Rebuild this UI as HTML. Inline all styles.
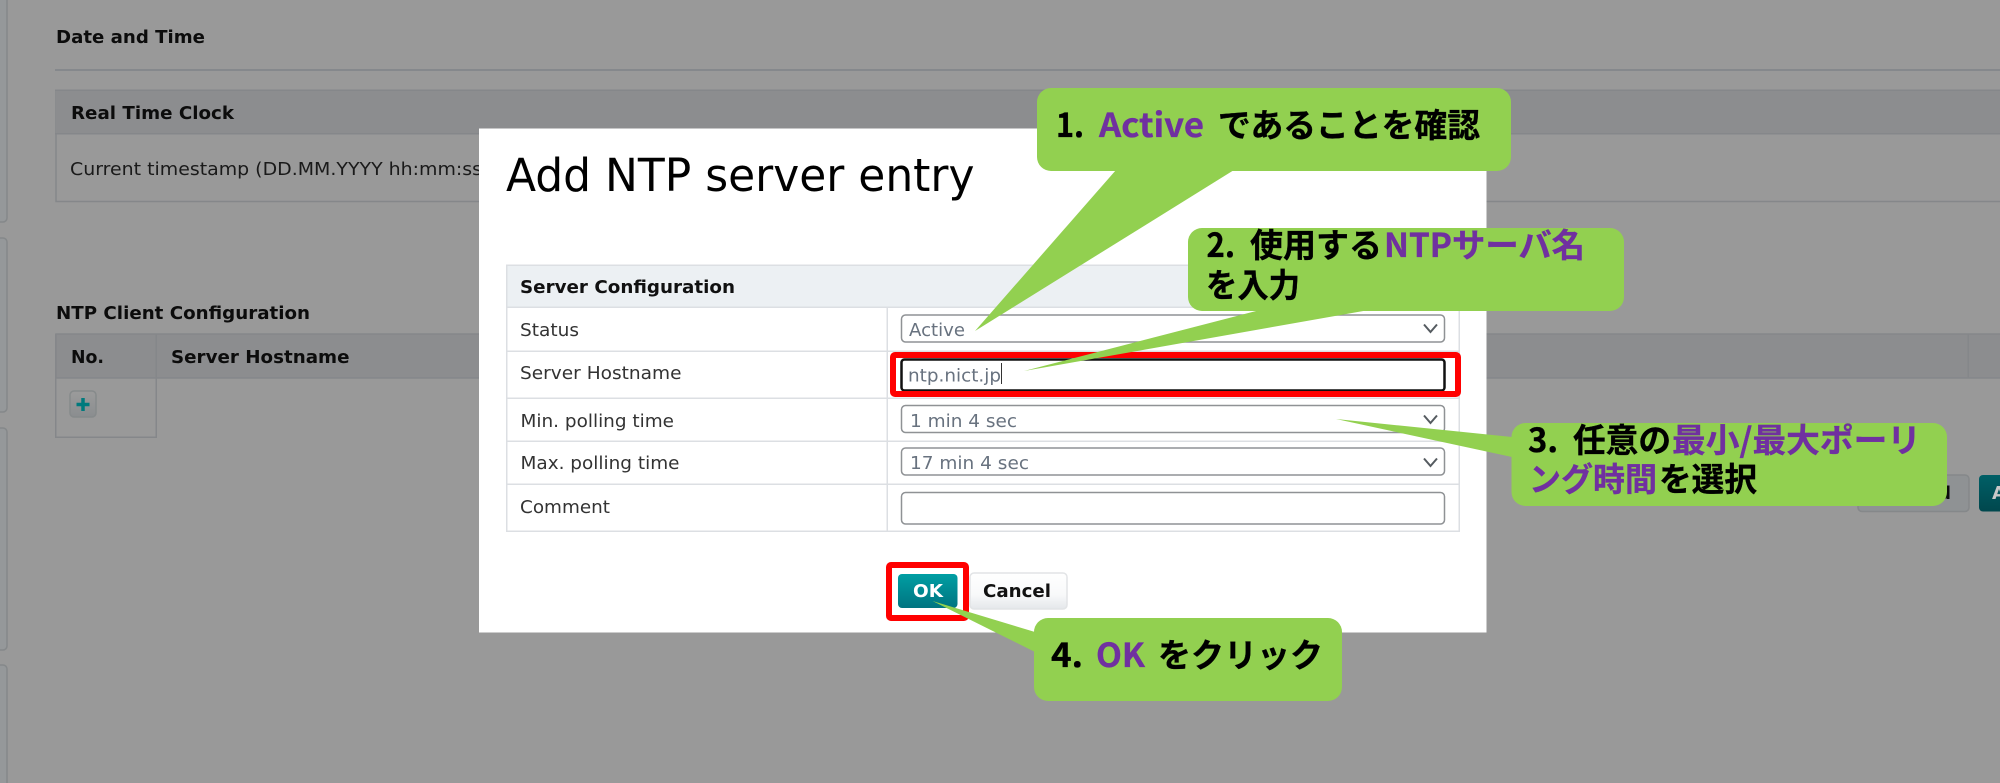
<!DOCTYPE html>
<html lang="ja">
<head>
<meta charset="utf-8">
<title>Add NTP server entry</title>
<style>
html,body{margin:0;padding:0;width:2000px;height:783px;overflow:hidden;background:#999}
svg{display:block;filter:blur(.3px)}
.v{font-family:"DejaVu Sans","Liberation Sans",sans-serif}
.b{font-weight:700;fill:#0c0c0c}
.j{font-family:"Noto Sans CJK JP","Liberation Sans",sans-serif;font-weight:700;font-size:33px;fill:#000;stroke:#000;stroke-width:.35px}
.p{fill:#7030a0;stroke:#7030a0}
.g{fill:#68727f}
.r{fill:#333}
</style>
</head>
<body>
<svg xmlns="http://www.w3.org/2000/svg" width="2000" height="783" viewBox="0 0 2000 783">
<defs>
<linearGradient id="ok" x1="0" y1="0" x2="0" y2="1"><stop offset="0" stop-color="#009ea3"/><stop offset="1" stop-color="#007480"/></linearGradient>
<linearGradient id="cn" x1="0" y1="0" x2="0" y2="1"><stop offset="0" stop-color="#fff"/><stop offset=".6" stop-color="#f8f9fa"/><stop offset="1" stop-color="#e4e7ea"/></linearGradient>
<linearGradient id="pl" x1="0" y1="0" x2="0" y2="1"><stop offset="0" stop-color="#9b9b9b"/><stop offset="1" stop-color="#8a8d8f"/></linearGradient>
<linearGradient id="ap" x1="0" y1="0" x2="0" y2="1"><stop offset="0" stop-color="#005f66"/><stop offset="1" stop-color="#00474d"/></linearGradient>
</defs>

<!-- page background -->
<rect width="2000" height="783" fill="#999"/>

<!-- sidebar boxes -->
<g fill="#95989a" stroke="#85888a" stroke-width="1.5">
<rect x="-10" y="-20" width="17" height="242" rx="4"/>
<rect x="-10" y="238" width="17" height="174" rx="4"/>
<rect x="-10" y="428" width="17" height="222" rx="4"/>
<rect x="-10" y="665" width="17" height="140" rx="4"/>
</g>

<!-- page content -->
<text class="v b" x="56" y="43" font-size="18" textLength="149" lengthAdjust="spacingAndGlyphs">Date and Time</text>
<rect x="55" y="69" width="1945" height="2" fill="#85888c"/>

<rect x="56" y="90.5" width="1950" height="111" fill="#999" stroke="#85878a" stroke-width="1.5"/>
<rect x="56" y="91" width="1950" height="42.5" fill="#8c8d8f"/>
<rect x="55" y="133" width="1945" height="1.5" fill="#85878a"/>
<rect x="55" y="89.5" width="1945" height="1.5" fill="#85878a"/>
<text class="v b" x="71" y="119" font-size="18" textLength="163" lengthAdjust="spacingAndGlyphs">Real Time Clock</text>
<text class="v" x="70" y="175" font-size="18" fill="#1a1a1a" textLength="412" lengthAdjust="spacingAndGlyphs">Current timestamp (DD.MM.YYYY hh:mm:ss</text>

<text class="v b" x="56" y="319" font-size="18" textLength="254" lengthAdjust="spacingAndGlyphs">NTP Client Configuration</text>
<rect x="56" y="334" width="1950" height="44" fill="#8c8d8f" stroke="#85878a" stroke-width="1.5"/>
<rect x="155.5" y="334" width="1.5" height="103" fill="#85878a"/>
<rect x="1967.5" y="334" width="1.5" height="44" fill="#85878a"/>
<rect x="55" y="334" width="1.5" height="103.500" fill="#85878a"/>
<rect x="55" y="436.500" width="102" height="1.500" fill="#85878a"/>
<text class="v b" x="71" y="363" font-size="18" textLength="33" lengthAdjust="spacingAndGlyphs">No.</text>
<text class="v b" x="171" y="363" font-size="18" textLength="178.500" lengthAdjust="spacingAndGlyphs">Server Hostname</text>

<rect x="70" y="391" width="26" height="26" rx="4" fill="url(#pl)" stroke="#868a8b" stroke-width="1.500"/>
<path d="M83 398V411M76.500 404.500H89.500" stroke="#007a7d" stroke-width="3.500" fill="none"/>

<!-- background buttons -->
<rect x="1858" y="475" width="111" height="36.500" rx="4" fill="#8f9294" stroke="#85888a" stroke-width="1.500"/>
<text class="v b" x="1878" y="499" font-size="18" textLength="73" lengthAdjust="spacingAndGlyphs">Discard</text>
<rect x="1979" y="475" width="40" height="36.500" rx="4" fill="url(#ap)"/>
<text class="v" x="1992" y="499" font-size="18" font-weight="700" fill="#c8c8c8">A</text>

<!-- modal -->
<rect x="479" y="128.500" width="1007.500" height="504" fill="#fff"/>
<text class="v" x="506" y="191" font-size="45" fill="#000" textLength="468.500" lengthAdjust="spacingAndGlyphs">Add NTP server entry</text>

<!-- modal table -->
<rect x="507" y="265.500" width="952" height="41.500" fill="#ecf0f3"/>
<g fill="#dcdfe3">
<rect x="506" y="264.500" width="953.500" height="1.500"/>
<rect x="506" y="306.500" width="953.500" height="1.500"/>
<rect x="506" y="350.500" width="953.500" height="1.500"/>
<rect x="506" y="397.500" width="953.500" height="1.500"/>
<rect x="506" y="440.500" width="953.500" height="1.500"/>
<rect x="506" y="483.500" width="953.500" height="1.500"/>
<rect x="506" y="530.500" width="953.500" height="1.500"/>
<rect x="506" y="264.500" width="1.500" height="267.500"/>
<rect x="1458.500" y="264.500" width="1.500" height="267.500"/>
<rect x="886.500" y="307" width="1.500" height="225"/>
</g>
<text class="v" x="520" y="293" font-size="18" font-weight="700" fill="#111" textLength="215" lengthAdjust="spacingAndGlyphs">Server Configuration</text>
<text class="v r" x="520" y="336" font-size="18" textLength="59" lengthAdjust="spacingAndGlyphs">Status</text>
<text class="v r" x="520" y="379" font-size="18" textLength="161.500" lengthAdjust="spacingAndGlyphs">Server Hostname</text>
<text class="v r" x="520.500" y="427" font-size="18" textLength="153.500" lengthAdjust="spacingAndGlyphs">Min. polling time</text>
<text class="v r" x="520.500" y="469" font-size="18" textLength="159" lengthAdjust="spacingAndGlyphs">Max. polling time</text>
<text class="v r" x="520" y="513" font-size="18" textLength="90" lengthAdjust="spacingAndGlyphs">Comment</text>

<!-- controls -->
<g fill="#fff" stroke="#8f9295" stroke-width="1.500">
<rect x="901.500" y="315" width="543" height="27" rx="4"/>
<rect x="901.500" y="405.500" width="543" height="27" rx="4"/>
<rect x="901.500" y="448" width="543" height="27" rx="4"/>
<rect x="901.500" y="492.500" width="543" height="31.500" rx="4"/>
</g>
<rect x="901.500" y="359.500" width="543" height="31" rx="3" fill="#fff" stroke="#111" stroke-width="2.500"/>
<g fill="none" stroke="#555b60" stroke-width="2">
<path d="M1424 324.500L1430.500 332L1437 324.500"/>
<path d="M1424 415.500L1430.500 423L1437 415.500"/>
<path d="M1424 458.500L1430.500 466L1437 458.500"/>
</g>
<text class="v g" x="909" y="336" font-size="18" textLength="56" lengthAdjust="spacingAndGlyphs">Active</text>
<text class="v g" x="908" y="381.500" font-size="18" textLength="93" lengthAdjust="spacingAndGlyphs">ntp.nict.jp</text>
<rect x="1001" y="363" width="1" height="21" fill="#333"/>
<text class="v g" x="910" y="427" font-size="18" textLength="107" lengthAdjust="spacingAndGlyphs">1 min 4 sec</text>
<text class="v g" x="910" y="469" font-size="18" textLength="119" lengthAdjust="spacingAndGlyphs">17 min 4 sec</text>

<!-- buttons -->
<rect x="898" y="574" width="59.500" height="34" rx="4" fill="url(#ok)"/>
<text class="v" x="913" y="597" font-size="18" font-weight="700" fill="#fff" textLength="30" lengthAdjust="spacingAndGlyphs">OK</text>
<rect x="970" y="573" width="97" height="36" rx="4" fill="url(#cn)" stroke="#e2e4e6" stroke-width="1.500"/>
<text class="v" x="983" y="597" font-size="18" font-weight="700" fill="#111" textLength="68" lengthAdjust="spacingAndGlyphs">Cancel</text>

<!-- red highlight frames -->
<rect x="893" y="355" width="565" height="39" rx="2" fill="none" stroke="#f00" stroke-width="6"/>
<rect x="889" y="565" width="77" height="53" rx="2" fill="none" stroke="#f00" stroke-width="6"/>

<!-- callouts -->
<g fill="#92d050">
<rect x="1037" y="88" width="474" height="83" rx="14"/>
<path d="M1116 170L975 331L1234 170Z"/>
<rect x="1188" y="228" width="436" height="83" rx="14"/>
<path d="M1260 310L1024 371L1369 310Z"/>
<rect x="1511.500" y="423" width="435.500" height="83" rx="14"/>
<path d="M1512 437L1336 419L1512 457Z"/>
<rect x="1034" y="618" width="308" height="83" rx="14"/>
<path d="M1035 632L932.500 601L1035 652Z"/>
</g>

<text class="j" x="1056" y="137" textLength="28" lengthAdjust="spacingAndGlyphs">1.</text>
<text class="j p" x="1099" y="137" textLength="105" lengthAdjust="spacingAndGlyphs">Active</text>
<text class="j" x="1218" y="137" textLength="262" lengthAdjust="spacingAndGlyphs">であることを確認</text>

<text class="j" x="1206.500" y="257" textLength="28.500" lengthAdjust="spacingAndGlyphs">2.</text>
<text class="j" x="1250" y="257" textLength="132" lengthAdjust="spacingAndGlyphs">使用する</text>
<text class="j p" x="1384" y="257" textLength="201" lengthAdjust="spacingAndGlyphs">NTPサーバ名</text>
<text class="j" x="1206" y="297" textLength="94" lengthAdjust="spacingAndGlyphs">を入力</text>

<text class="j" x="1528" y="452" textLength="30" lengthAdjust="spacingAndGlyphs">3.</text>
<text class="j" x="1573" y="452" textLength="98" lengthAdjust="spacingAndGlyphs">任意の</text>
<text class="j p" x="1672" y="452" textLength="249" lengthAdjust="spacingAndGlyphs">最小/最大ポーリ</text>
<text class="j p" x="1529" y="491" textLength="128" lengthAdjust="spacingAndGlyphs">ング時間</text>
<text class="j" x="1659" y="491" textLength="98" lengthAdjust="spacingAndGlyphs">を選択</text>

<text class="j" x="1051" y="667" textLength="32" lengthAdjust="spacingAndGlyphs">4.</text>
<text class="j p" x="1096" y="667" textLength="49" lengthAdjust="spacingAndGlyphs">OK</text>
<text class="j" x="1158" y="667" textLength="165" lengthAdjust="spacingAndGlyphs">をクリック</text>
</svg>
</body>
</html>
